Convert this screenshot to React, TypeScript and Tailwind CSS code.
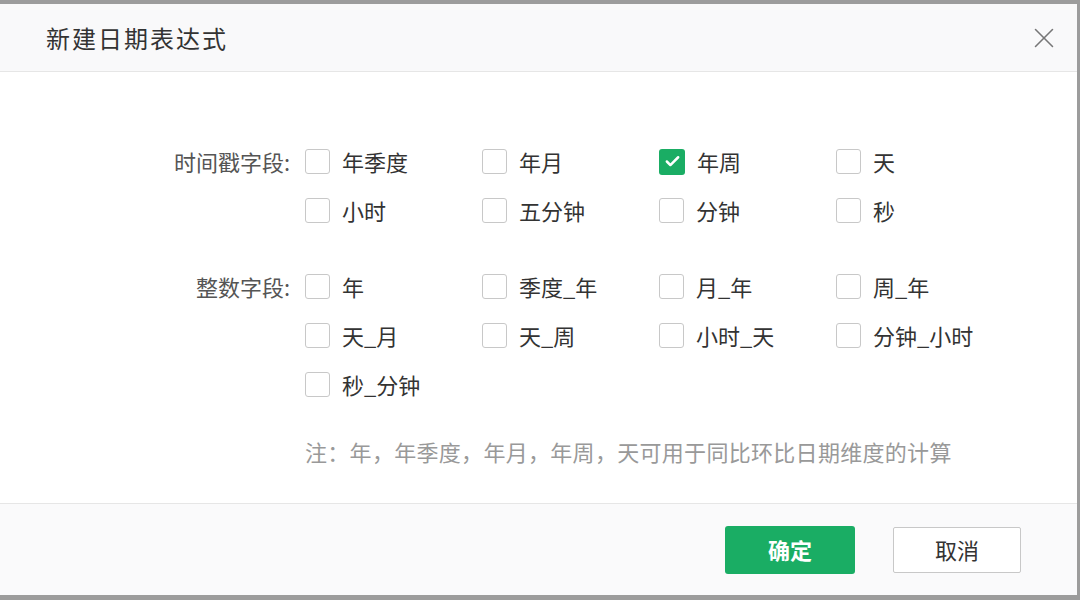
import { X, Check } from 'lucide-react'

const timeFields = ['年季度', '年月', '年周', '天', '小时', '五分钟', '分钟', '秒']
const intFields = ['年', '季度_年', '月_年', '周_年', '天_月', '天_周', '小时_天', '分钟_小时', '秒_分钟']

function CheckItem({ label, checked }: { label: string; checked?: boolean }) {
  return (
    <div className="flex items-center h-[49px] gap-[12px]">
      {checked ? (
        <span className="w-[26px] h-[26px] rounded-[3px] bg-[#1aad64] flex items-center justify-center">
          <Check className="w-[17px] h-[17px] text-white" strokeWidth={3.5} />
        </span>
      ) : (
        <span className="w-[25px] h-[25px] rounded-[3px] border border-[#c8c8c8] bg-white" />
      )}
      <span className="text-[22px] text-[#333]">{label}</span>
    </div>
  )
}

function FieldGroup({ title, items, checked }: { title: string; items: string[]; checked?: string }) {
  return (
    <div className="flex">
      <div className="w-[290px] h-[49px] flex items-center justify-end text-[22px] text-[#555]">{title}</div>
      <div className="ml-[15px] grid grid-cols-[177px_177px_177px_177px]">
        {items.map((it) => (
          <CheckItem key={it} label={it} checked={it === checked} />
        ))}
      </div>
    </div>
  )
}

export default function App() {
  return (
    <div
      className="w-[1080px] h-[600px] bg-[#9c9c9c] pt-[4px] pb-[5px] pr-[3px] flex"
      style={{ fontFamily: '"Noto Sans CJK SC", "Noto Sans", sans-serif' }}
    >
      <div className="flex-1 flex flex-col bg-white">
        {/* Header */}
        <div className="h-[68px] flex items-center justify-between bg-[#f9f9fa] border-b border-[#e6e6e6] pl-[46px] pr-[16px]">
          <span className="text-[24px] tracking-[2px] text-[#333]">新建日期表达式</span>
          <X className="w-[34px] h-[34px] text-[#777]" strokeWidth={1.1} />
        </div>

        {/* Body */}
        <div className="flex-1 pt-[65px]">
          <FieldGroup title="时间戳字段:" items={timeFields} checked="年周" />
          <div className="mt-[27px]">
            <FieldGroup title="整数字段:" items={intFields} />
          </div>
          <p className="mt-[27px] ml-[305px] text-[22px] tracking-[0.3px] leading-[30px] text-[#999]">
            注：年，年季度，年月，年周，天可用于同比环比日期维度的计算
          </p>
        </div>

        {/* Footer */}
        <div className="h-[92px] flex items-center justify-end gap-[38px] pr-[56px] bg-[#fafafb] border-t border-[#e6e6e6]">
          <button className="w-[130px] h-[48px] rounded-[3px] bg-[#1aad64] text-white text-[22px] font-bold">确定</button>
          <button className="w-[128px] h-[46px] rounded-[2px] bg-white border border-[#c8c8c8] text-[#333] text-[22px]">取消</button>
        </div>
      </div>
    </div>
  )
}
